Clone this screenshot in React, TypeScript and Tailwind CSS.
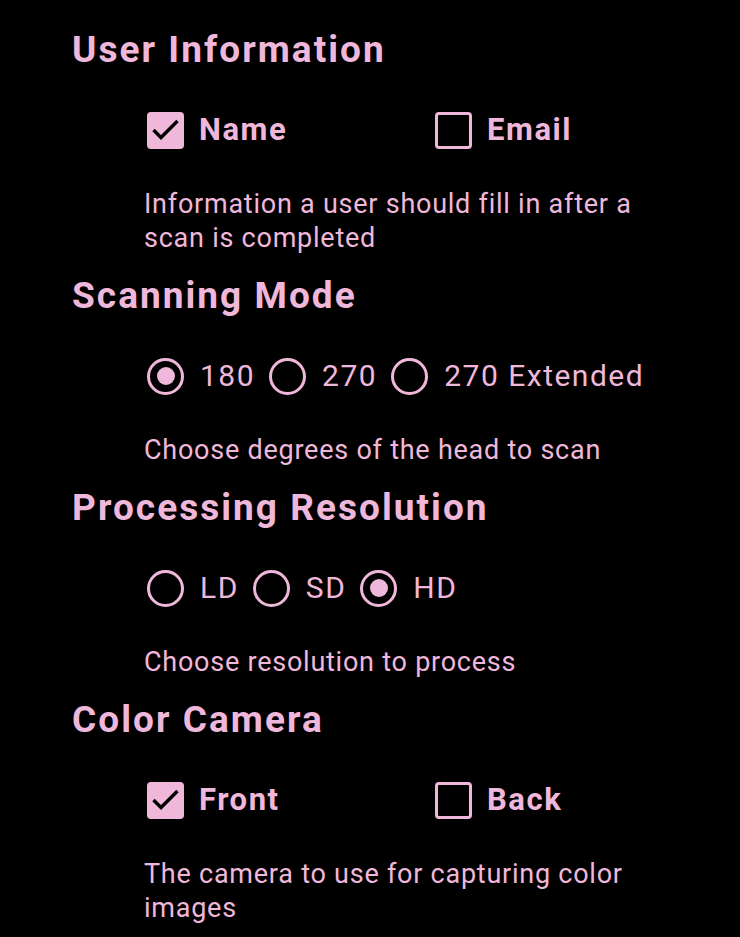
import React from "react";

const C = "#efb8da";

function Check({ checked, label }: { checked: boolean; label: string }) {
  return (
    <div className="flex items-center h-[48px]">
      {checked ? (
        <div className="w-[37px] h-[37px] rounded-[4px] bg-[#efb8da] flex items-center justify-center">
          <svg width="37" height="37" viewBox="0 0 37 37">
            <path d="M6.5 18 L14 25.5 L30.5 9" fill="none" stroke="#000" strokeWidth="3.4" />
          </svg>
        </div>
      ) : (
        <div className="w-[37px] h-[37px] rounded-[4px] border-[3.5px] border-[#efb8da]" />
      )}
      <span className="ml-[15px] text-[31px] font-bold tracking-[0.05em] text-[#efb8da] leading-[48px]">{label}</span>
    </div>
  );
}

function Radio({ checked, label }: { checked: boolean; label: string }) {
  return (
    <div className="flex items-center h-[48px] mr-[14px]">
      <div className="w-[37px] h-[37px] rounded-full border-[3.6px] border-[#efb8da] flex items-center justify-center">
        {checked && <div className="w-[18px] h-[18px] rounded-full bg-[#efb8da]" />}
      </div>
      <span className="ml-[16px] text-[30px] tracking-[0.05em] text-[#efb8da] leading-[48px]">{label}</span>
    </div>
  );
}

function Section({
  title,
  desc,
  children,
  first,
}: {
  title: string;
  desc: string;
  children: React.ReactNode;
  first?: boolean;
}) {
  return (
    <div className={first ? "" : "mt-[19px]"}>
      <div className="h-[44px] leading-[44px] text-[37px] font-bold tracking-[0.055em] text-[#efb8da] pl-[72px]">{title}</div>
      <div className="mt-[34px] pl-[147px] flex">{children}</div>
      <div className="mt-[33px] pl-[144px] pr-[70px] text-[27px] tracking-[0.028em] leading-[34px] text-[#efb8da]">{desc}</div>
    </div>
  );
}

export default function App() {
  return (
    <div
      className="w-[740px] h-[937px] bg-black overflow-hidden pt-[28px]"
      style={{ fontFamily: "Roboto, 'Noto Sans', sans-serif", color: C }}
    >
      <Section first title="User Information" desc="Information a user should fill in after a scan is completed">
        <div className="w-[288px]"><Check checked label="Name" /></div>
        <Check checked={false} label="Email" />
      </Section>
      <Section title="Scanning Mode" desc="Choose degrees of the head to scan">
        <Radio checked label="180" />
        <Radio checked={false} label="270" />
        <Radio checked={false} label="270 Extended" />
      </Section>
      <Section title="Processing Resolution" desc="Choose resolution to process">
        <Radio checked={false} label="LD" />
        <Radio checked={false} label="SD" />
        <Radio checked label="HD" />
      </Section>
      <Section title="Color Camera" desc="The camera to use for capturing color images">
        <div className="w-[288px]"><Check checked label="Front" /></div>
        <Check checked={false} label="Back" />
      </Section>
    </div>
  );
}
